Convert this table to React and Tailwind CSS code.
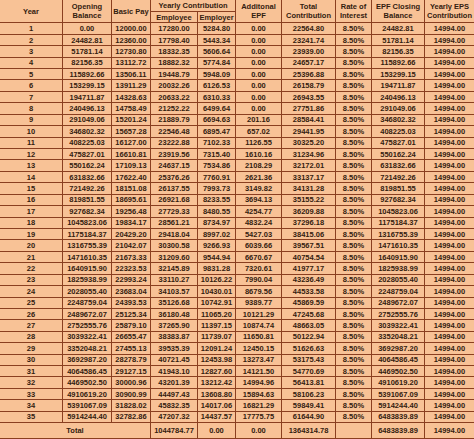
import { Fragment } from "react";

const rows = [
  ["1", "0.00", "12000.00", "17280.00", "5284.80", "0.00", "22564.80", "24482.81"],
  ["2", "24482.81", "12360.00", "17798.40", "5443.34", "0.00", "23241.74", "51781.14"],
  ["3", "51781.14", "12730.80", "18332.35", "5606.64", "0.00", "23939.00", "82156.35"],
  ["4", "82156.35", "13112.72", "18882.32", "5774.84", "0.00", "24657.17", "115892.66"],
  ["5", "115892.66", "13506.11", "19448.79", "5948.09", "0.00", "25396.88", "153299.15"],
  ["6", "153299.15", "13911.29", "20032.26", "6126.53", "0.00", "26158.79", "194711.87"],
  ["7", "194711.87", "14328.63", "20633.22", "6310.33", "0.00", "26943.55", "240496.13"],
  ["8", "240496.13", "14758.49", "21252.22", "6499.64", "0.00", "27751.86", "291049.06"],
  ["9", "291049.06", "15201.24", "21889.79", "6694.63", "201.16", "28584.41", "346802.32"],
  ["10", "346802.32", "15657.28", "22546.48", "6895.47", "657.02", "29441.95", "408225.03"],
  ["11", "408225.03", "16127.00", "23222.88", "7102.33", "1126.55", "30325.20", "475827.01"],
  ["12", "475827.01", "16610.81", "23919.56", "7315.40", "1610.16", "31234.96", "550162.24"],
  ["13", "550162.24", "17109.13", "24637.15", "7534.86", "2108.29", "32172.01", "631832.66"],
  ["14", "631832.66", "17622.40", "25376.26", "7760.91", "2621.36", "33137.17", "721492.26"],
  ["15", "721492.26", "18151.08", "26137.55", "7993.73", "3149.82", "34131.28", "819851.55"],
  ["16", "819851.55", "18695.61", "26921.68", "8233.55", "3694.13", "35155.22", "927682.34"],
  ["17", "927682.34", "19256.48", "27729.33", "8480.55", "4254.77", "36209.88", "1045823.06"],
  ["18", "1045823.06", "19834.17", "28561.21", "8734.97", "4832.24", "37296.18", "1175184.37"],
  ["19", "1175184.37", "20429.20", "29418.04", "8997.02", "5427.03", "38415.06", "1316755.39"],
  ["20", "1316755.39", "21042.07", "30300.58", "9266.93", "6039.66", "39567.51", "1471610.35"],
  ["21", "1471610.35", "21673.33", "31209.60", "9544.94", "6670.67", "40754.54", "1640915.90"],
  ["22", "1640915.90", "22323.53", "32145.89", "9831.28", "7320.61", "41977.17", "1825938.99"],
  ["23", "1825938.99", "22993.24", "33110.27", "10126.22", "7990.04", "43236.49", "2028055.40"],
  ["24", "2028055.40", "23683.04", "34103.57", "10430.01", "8679.56", "44533.58", "2248759.04"],
  ["25", "2248759.04", "24393.53", "35126.68", "10742.91", "9389.77", "45869.59", "2489672.07"],
  ["26", "2489672.07", "25125.34", "36180.48", "11065.20", "10121.29", "47245.68", "2752555.76"],
  ["27", "2752555.76", "25879.10", "37265.90", "11397.15", "10874.74", "48663.05", "3039322.41"],
  ["28", "3039322.41", "26655.47", "38383.87", "11739.07", "11650.81", "50122.94", "3352048.21"],
  ["29", "3352048.21", "27455.13", "39535.39", "12091.24", "12450.15", "51626.63", "3692987.20"],
  ["30", "3692987.20", "28278.79", "40721.45", "12453.98", "13273.47", "53175.43", "4064586.45"],
  ["31", "4064586.45", "29127.15", "41943.10", "12827.60", "14121.50", "54770.69", "4469502.50"],
  ["32", "4469502.50", "30000.96", "43201.39", "13212.42", "14994.96", "56413.81", "4910619.20"],
  ["33", "4910619.20", "30900.99", "44497.43", "13608.80", "15894.63", "58106.23", "5391067.09"],
  ["34", "5391067.09", "31828.02", "45832.35", "14017.06", "16821.29", "59849.41", "5914244.40"],
  ["35", "5914244.40", "32782.86", "47207.32", "14437.57", "17775.75", "61644.90", "6483839.89"],
];

const cell = "flex items-center justify-center border-r border-b border-[#8a3f20] text-center leading-[1.2] whitespace-nowrap";

export default function App() {
  return (
    <div className="w-[474px] h-[439px] overflow-hidden bg-[#f8c296]">
      <div
        className="grid w-[480px] grid-cols-[63px_49px_39px_47px_38px_46px_54px_36px_53px_55px] grid-rows-[11.7px_11.7px_repeat(35,11.43px)_16px] text-[7.5px] font-bold text-[#33200f]"
        style={{ fontFamily: '"Liberation Sans", Arial, sans-serif' }}
      >
        {/* header */}
        <div className={`${cell} row-span-2`}>Year</div>
        <div className={`${cell} row-span-2`}>Opening<br />Balance</div>
        <div className={`${cell} row-span-2`}>Basic Pay</div>
        <div className={`${cell} col-span-2`}>Yearly Contribution</div>
        <div className={`${cell} row-span-2`}>Additonal<br />EPF</div>
        <div className={`${cell} row-span-2`}>Total<br />Contribution</div>
        <div className={`${cell} row-span-2`}>Rate of<br />Interest</div>
        <div className={`${cell} row-span-2`}>EPF Closing<br />Balance</div>
        <div className={`${cell} row-span-2 pr-[5px]`}>Yearly EPS<br />Contribution</div>
        <div className={cell}>Employee</div>
        <div className={cell}>Employer</div>

        {rows.map((r) => (
          <Fragment key={r[0]}>
            <div className={cell}>{r[0]}</div>
            <div className={cell}>{r[1]}</div>
            <div className={cell}>{r[2]}</div>
            <div className={cell}>{r[3]}</div>
            <div className={cell}>{r[4]}</div>
            <div className={cell}>{r[5]}</div>
            <div className={cell}>{r[6]}</div>
            <div className={cell}>8.50%</div>
            <div className={cell}>{r[7]}</div>
            <div className={`${cell} pr-[5px]`}>14994.00</div>
          </Fragment>
        ))}

        {/* total row */}
        <div className={`${cell} col-span-3`}>Total</div>
        <div className={cell}>1044784.77</div>
        <div className={cell}>0.00</div>
        <div className={cell}>0.00</div>
        <div className={cell}>1364314.78</div>
        <div className={cell}></div>
        <div className={cell}>6483839.89</div>
        <div className={`${cell} pr-[5px]`}>14994.00</div>
      </div>
    </div>
  );
}
